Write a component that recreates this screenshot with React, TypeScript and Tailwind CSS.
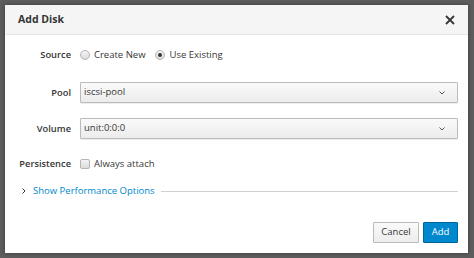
import React from 'react';

const font = { fontFamily: '"Open Sans", "Liberation Sans", sans-serif' };

function Chevron() {
  return (
    <svg width="6" height="4" viewBox="0 0 6 4" className="text-[#555]">
      <path d="M0.5 0.5 L3 3 L5.5 0.5" fill="none" stroke="currentColor" strokeWidth="1" />
    </svg>
  );
}

function Select({ value }: { value: string }) {
  return (
    <div className="flex h-[21px] w-[378px] items-center justify-between rounded-[1px] border border-[#bbbbbb] bg-gradient-to-b from-[#fafafa] to-[#ececec] pl-[3px] pr-[12px] text-[9.5px] text-[#363636] shadow-[0_1px_1px_rgba(3,3,3,0.08)]">
      <span>{value}</span>
      <Chevron />
    </div>
  );
}

function Radio({ checked }: { checked?: boolean }) {
  return (
    <span className="flex h-[10px] w-[10px] items-center justify-center rounded-full border border-[#b4b4b4] bg-gradient-to-b from-[#f4f4f4] to-[#dcdcdc]">
      {checked && <span className="h-[4px] w-[4px] rounded-full bg-[#333]" />}
    </span>
  );
}

function Row({ label, children, className = '' }: { label: string; children: React.ReactNode; className?: string }) {
  return (
    <div className={`flex items-center ${className}`}>
      <div className="w-[66px] text-right text-[9.3px] font-semibold text-[#363636]">{label}</div>
      <div className="ml-[9px] flex items-center">{children}</div>
    </div>
  );
}

export default function App() {
  return (
    <div className="h-[258px] w-[474px] overflow-hidden bg-[#5d5d5d] pl-[5px] pt-[5px]" style={font}>
      <div className="flex h-[248px] w-[463px] flex-col bg-white shadow-[0_0_4px_rgba(0,0,0,0.4)]">
        <div className="flex h-[30px] items-center justify-between border-b border-[#e5e5e5] bg-[#f5f5f5] pl-[13px] pr-[13px]">
          <h1 className="text-[10.5px] font-bold text-[#363636]">Add Disk</h1>
          <svg width="10" height="10" viewBox="0 0 10 10" className="text-[#363636]">
            <path d="M1 1 L9 9 M9 1 L1 9" stroke="currentColor" strokeWidth="1.8" />
          </svg>
        </div>

        <div className="pt-[10px]">
          <Row label="Source" className="h-[20px]">
            <label className="flex items-center gap-[4px] text-[9.5px] text-[#363636]">
              <Radio />
              <span>Create New</span>
            </label>
            <label className="ml-[9px] flex items-center gap-[5px] text-[9.5px] text-[#363636]">
              <Radio checked />
              <span>Use Existing</span>
            </label>
          </Row>

          <Row label="Pool" className="mt-[17px]">
            <Select value="iscsi-pool" />
          </Row>

          <Row label="Volume" className="mt-[15px]">
            <Select value="unit:0:0:0" />
          </Row>

          <Row label="Persistence" className="mt-[15px] h-[20px]">
            <label className="flex items-center gap-[4px] text-[9.5px] text-[#363636]">
              <span className="h-[10px] w-[10px] rounded-[2px] border border-[#b4b4b4] bg-gradient-to-b from-[#f4f4f4] to-[#dcdcdc]" />
              <span>Always attach</span>
            </label>
          </Row>

          <div className="mt-[7px] flex h-[20px] items-center pl-[17px] pr-[10px]">
            <svg width="4" height="6" viewBox="0 0 4 6" className="text-[#363636]">
              <path d="M0.5 0.5 L3 3 L0.5 5.5" fill="none" stroke="currentColor" strokeWidth="1" />
            </svg>
            <span className="ml-[7px] text-[9.5px] text-[#0088ce]">Show Performance Options</span>
            <div className="ml-[6px] h-px flex-1 bg-[#d1d1d1]" />
          </div>
        </div>

        <div className="mt-auto flex justify-end gap-[4px] pb-[10px] pr-[10px]">
          <button className="h-[21px] w-[46px] rounded-[1px] border border-[#bbbbbb] bg-gradient-to-b from-[#fafafa] to-[#ededed] text-[9.5px] text-[#363636]">
            Cancel
          </button>
          <button className="h-[21px] w-[35px] rounded-[1px] border border-[#00659c] bg-[#0088ce] text-[9.5px] text-white">
            Add
          </button>
        </div>
      </div>
    </div>
  );
}
